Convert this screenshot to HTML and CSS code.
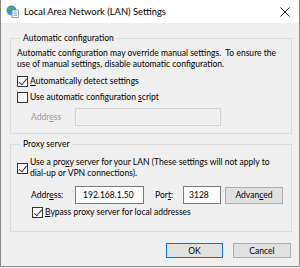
FILE: index.html
```html
<!DOCTYPE html>
<html lang="en">
<head>
    <meta charset="UTF-8">
    <title>Local Area Network (LAN) Settings</title>
    <link rel="stylesheet" href="styles.css">
</head>
<body>
  <div class="window">
    <div class="titlebar">
      <svg class="app-icon" width="13" height="13" viewBox="0 0 13 13">
        <circle cx="5.5" cy="5.5" r="5" fill="#3a8fd6"/>
        <path d="M2 3 Q4 2 5 4 Q4 6 2 5 Z M6 1.5 Q8 2 9 4 Q7 5 6 3 Z" fill="#5fb33a"/>
        <rect x="6" y="5" width="6.5" height="7.5" fill="#fff" stroke="#7a8ea6" stroke-width="0.8"/>
        <path d="M7.5 7h3.5M7.5 8.7h3.5M7.5 10.4h3.5" stroke="#5b7fb0" stroke-width="0.7"/>
      </svg>
      <span class="title">Local Area Network (LAN) Settings</span>
      <svg class="close" width="10" height="10" viewBox="0 0 10 10">
        <path d="M0.5 0.5L9.5 9.5M9.5 0.5L0.5 9.5" stroke="#222" stroke-width="1"/>
      </svg>
    </div>

    <div class="content">
      <fieldset class="group">
        <legend>Automatic configuration</legend>
        <p class="desc">Automatic configuration may override manual settings.&nbsp; To ensure the use of manual settings, disable automatic configuration.</p>
        <div class="check-row first">
          <span class="box checked"></span>
          <span><u>A</u>utomatically detect settings</span>
        </div>
        <div class="check-row">
          <span class="box"></span>
          <span>Use automatic configuration <u>s</u>cript</span>
        </div>
        <div class="field-row">
          <span class="label disabled">Addr<u>e</u>ss</span>
          <span class="input disabled wide"></span>
        </div>
      </fieldset>

      <fieldset class="group proxy">
        <legend>Proxy server</legend>
        <div class="check-row multi">
          <span class="box checked"></span>
          <span>Use a pro<u>x</u>y server for your LAN (These settings will not apply to dial-up or VPN connections).</span>
        </div>
        <div class="field-row">
          <span class="label">Addr<u>e</u>ss:</span>
          <span class="input addr">192.168.1.50</span>
          <span class="label port">Por<u>t</u>:</span>
          <span class="input portnum">3128</span>
          <span class="button adv">Advan<u>c</u>ed</span>
        </div>
        <div class="check-row indent">
          <span class="box checked"></span>
          <span><u>B</u>ypass proxy server for local addresses</span>
        </div>
      </fieldset>

      <div class="actions">
        <span class="button ok">OK</span>
        <span class="button">Cancel</span>
      </div>
    </div>
  </div>
</body>
</html>
```

FILE: styles.css
```css
*{
    margin:0;
    padding:0;
    box-sizing:border-box;
}

html{
    font-family: Lato, "Noto Sans", sans-serif;
    font-size:8.55px;
    color:#000;
    --bg:#f0f0f0;
    --frame:#8a8a8a;
    --group:#dcdcdc;
    --field-border:#7a7a7a;
    --btn-bg:#e1e1e1;
    --btn-border:#adadad;
    --focus:#0078d7;
    --muted:#9a9a9a;
}

body{
    width:300px;
    height:268px;
    background:#fff;
}

.window{
    width:300px;
    height:267px;
    background:var(--bg);
    border:1px solid var(--frame);
    border-top:none;
    display:flex;
    flex-direction:column;
}

.titlebar{
    height:23px;
    background:#fff;
    display:flex;
    align-items:center;
    padding-left:5px;
    padding-right:9px;
}

.app-icon{ margin-right:5px; }

.title{
    font-size:9.4px;
    flex:1;
    color:#000;
}

.content{
    flex:1;
    padding:10px 7px 0 9px;
    display:flex;
    flex-direction:column;
}

.group{
    border:1px solid var(--group);
    padding:0 6px 7px 6px;
}

.group legend{
    margin-left:4px;
    padding:0 2px;
    line-height:11px;
}

.desc{
    line-height:11px;
    margin-top:4px;
}

.check-row{
    display:flex;
    align-items:center;
    height:16px;
}

.check-row.first{ margin-top:3px; }

.check-row.multi{
    height:22px;
    margin-top:7px;
    line-height:11px;
}

.check-row.indent{ margin-left:15px; }

.box{
    flex:none;
    width:11px;
    height:11px;
    border:1px solid #333;
    background:#fff;
    margin-right:2px;
    position:relative;
}

.box.checked::after{
    content:"";
    position:absolute;
    left:3px;
    top:0px;
    width:3px;
    height:7px;
    border:solid #333;
    border-width:0 1.2px 1.2px 0;
    transform:rotate(40deg);
}

.field-row{
    display:flex;
    align-items:center;
    margin-top:3px;
    padding-left:14px;
}

.proxy .field-row{ margin-top:7px; }

.label{ width:44px; }
.label.disabled{ color:var(--muted); }
.label.port{ width:28px; margin-left:11px; }

.input{
    height:18px;
    border:1px solid var(--field-border);
    background:#fff;
    display:flex;
    align-items:center;
    padding-left:7px;
}

.input.disabled{
    border-color:#d4d4d4;
    background:var(--bg);
}

.input.wide{ width:146px; }
.input.addr{ width:69px; }
.input.portnum{ width:38px; padding-left:5px; }

.button{
    display:flex;
    align-items:center;
    justify-content:center;
    height:17px;
    background:var(--btn-bg);
    border:1px solid var(--btn-border);
    width:58px;
}

.button.adv{ margin-left:4px; }

.proxy{
    margin-top:5px;
    padding-bottom:11px;
}

.actions{
    display:flex;
    justify-content:flex-end;
    gap:10px;
    margin-top:11px;
    padding-right:1px;
}

.actions .button{ height:15px; width:58px; }
.button.ok{ border:1px solid var(--focus); width:57px; }
```
